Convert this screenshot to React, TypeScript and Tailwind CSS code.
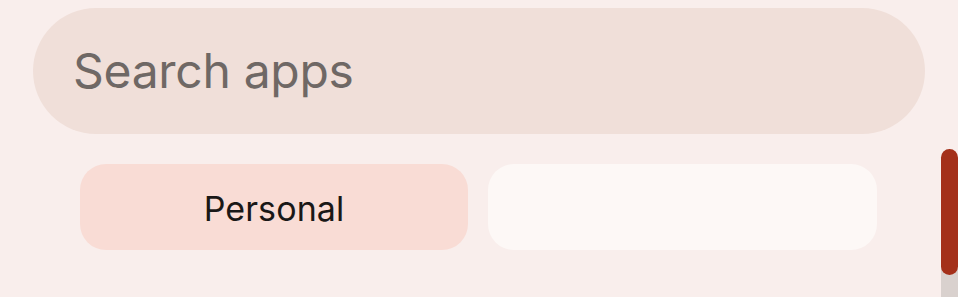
export default function App() {
  return (
    <div
      className="relative h-[297px] w-[958px] overflow-hidden bg-[#f9eeec]"
      style={{ fontFamily: 'Inter, "Noto Sans", sans-serif' }}
    >
      <div className="pt-2 pl-[33px]">
        {/* Search */}
        <div className="flex h-[126px] w-[892px] items-center rounded-full bg-[#f0dfd9] pl-[40px]">
          <span className="text-[48px] leading-none tracking-[-0.3px] text-[#6f6865]">Search apps</span>
        </div>

        {/* Tabs */}
        <div className="mt-[30px] ml-[47px] flex gap-5">
          <button className="flex h-[86px] w-[388px] items-center justify-center rounded-[26px] bg-[#f9dcd5] pt-[2px] text-[34px] tracking-[0.1px] text-[#1a1817]">
            Personal
          </button>
          <button className="h-[86px] w-[389px] rounded-[26px] bg-[#fdf8f6]" />
        </div>
      </div>

      {/* Scrollbar */}
      <div className="absolute top-[262px] right-0 h-[35px] w-[17px] bg-[#d9d1ce]" />
      <div className="absolute top-[149px] right-0 h-[126px] w-[17px] rounded-full bg-[#a4301a]" />
    </div>
  );
}
